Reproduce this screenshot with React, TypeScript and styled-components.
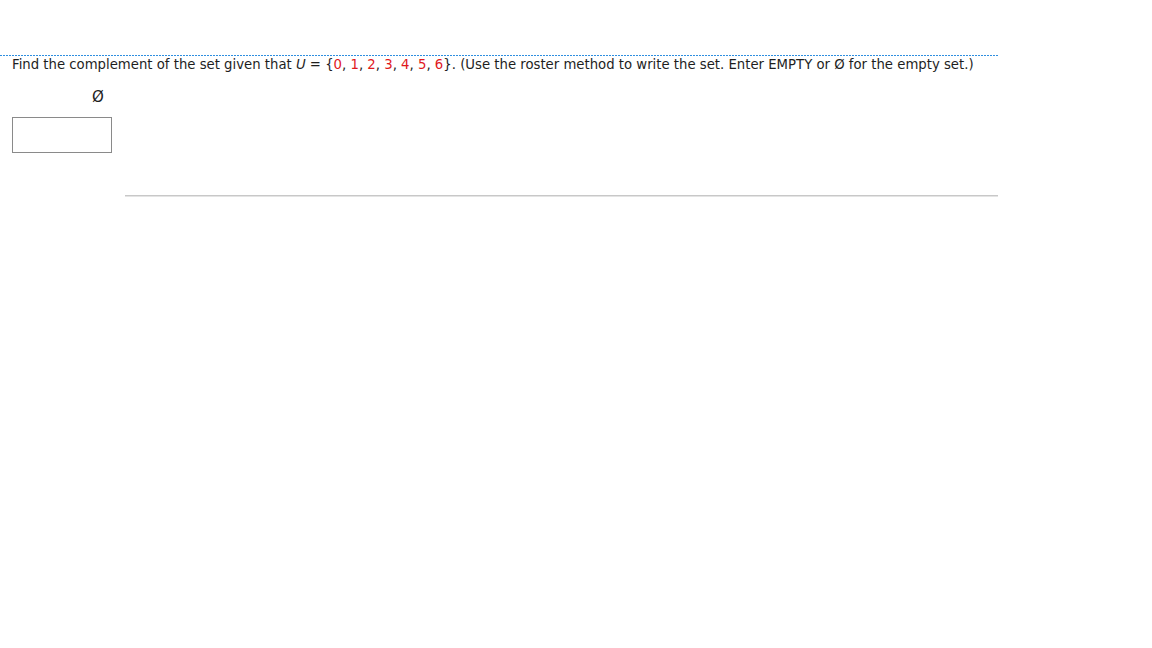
import React from "react";
import styled, { createGlobalStyle } from "styled-components";

const Global = createGlobalStyle`
  html, body { margin: 0; padding: 0; background: #fff; }
  body { font-family: "DejaVu Sans", Verdana, sans-serif; color: #1e1e1e; }
`;

const Page = styled.div`
  width: 998px;
  padding-top: 55px;
`;

const Question = styled.div`
  padding: 2px 0 0 12px;
  background-image: repeating-linear-gradient(
    to right,
    #2f8fe0 0,
    #2f8fe0 2px,
    transparent 2px,
    transparent 3px
  );
  background-size: 100% 1px;
  background-repeat: no-repeat;
  background-position: top left;
`;

const Prompt = styled.p`
  margin: 0;
  font-size: 13.25px;
  line-height: 16px;
  white-space: nowrap;
`;

const Var = styled.i`
  font-style: italic;
`;

const Red = styled.span`
  color: #e0191d;
`;

const Answer = styled.div`
  display: flex;
  flex-direction: column;
  align-items: flex-start;
  padding-top: 17px;
`;

const Symbol = styled.div`
  font-size: 15px;
  line-height: 14px;
  padding-left: 80px;
`;

const Input = styled.input`
  margin-top: 13px;
  width: 100px;
  height: 36px;
  box-sizing: border-box;
  border: 1px solid #8a8a8a;
  outline: none;
  font-family: inherit;
`;

const Rule = styled.hr`
  margin: 42px 0 0 125px;
  border: none;
  border-top: 1px solid #c8c8c8;
  border-bottom: 1px solid #e4e4e4;
  height: 0;
`;

export default function App() {
  return (
    <>
      <Global />
      <Page>
        <Question>
          <Prompt>
            Find the complement of the set given that <Var>U</Var> = {"{"}
            <Red>0</Red>, <Red>1</Red>, <Red>2</Red>, <Red>3</Red>, <Red>4</Red>, <Red>5</Red>, <Red>6</Red>
            {"}"}. (Use the roster method to write the set. Enter EMPTY or Ø for the empty set.)
          </Prompt>
          <Answer>
            <Symbol>Ø</Symbol>
            <Input type="text" />
          </Answer>
        </Question>
        <Rule />
      </Page>
    </>
  );
}
